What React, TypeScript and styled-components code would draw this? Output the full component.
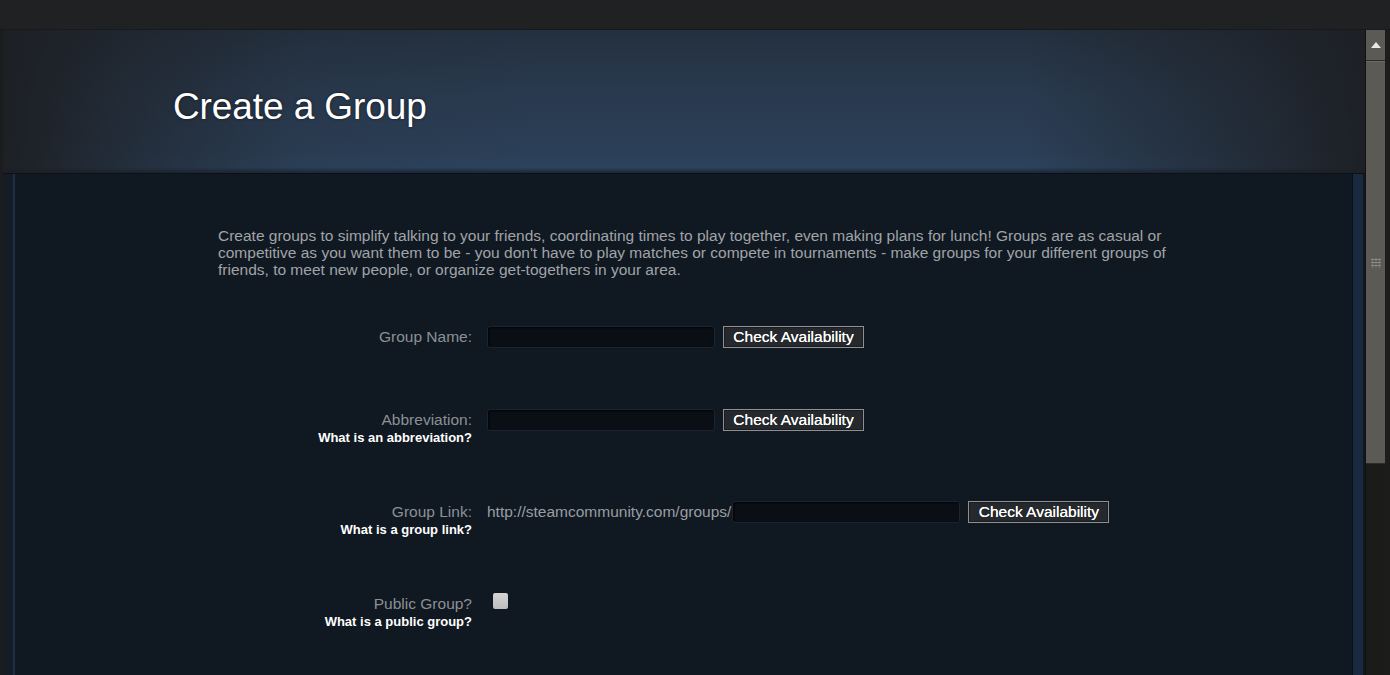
import styled, { createGlobalStyle } from "styled-components";

const GlobalStyle = createGlobalStyle`
  html, body {
    margin: 0;
    padding: 0;
    background: #1f2021;
    overflow: hidden;
  }
  body {
    font-family: "Liberation Sans", Arial, sans-serif;
  }
`;

const Screen = styled.div`
  height: 675px;
  display: flex;
  flex-direction: column;
`;

const TopBar = styled.div`
  height: 30px;
  flex: none;
  background: #202122;
  border-bottom: 1px solid #18191a;
  box-sizing: border-box;
`;

const WindowRow = styled.div`
  flex: 1;
  display: flex;
  padding-left: 3px;
  min-height: 0;
  background: #1b1c1d;
`;

const Main = styled.div`
  flex: 1;
  display: flex;
  flex-direction: column;
  min-width: 0;
`;

const Header = styled.header`
  height: 144px;
  flex: none;
  box-sizing: border-box;
  padding: 56px 0 0 170px;
  border-bottom: 1px solid #0c1118;
  background:
    linear-gradient(to right, rgba(28, 30, 34, 0.95) 0%, rgba(28, 30, 34, 0.55) 9%, rgba(28, 30, 34, 0.1) 22%, transparent 40%, transparent 75%, rgba(28, 30, 34, 0.6) 92%, rgba(28, 30, 34, 0.92) 100%),
    linear-gradient(to bottom, #24303f 0%, #293a4f 45%, #2b3f57 85%, #2c435d 96%, #1b2636 100%);
`;

const Title = styled.h1`
  margin: 0;
  font-size: 37px;
  font-weight: 400;
  color: #ffffff;
  text-shadow: 0 0 3px rgba(0, 0, 0, 0.6);
  letter-spacing: -0.1px;
`;

const Body = styled.div`
  flex: 1;
  display: flex;
  min-height: 0;
`;

const LeftFrame = styled.div`
  width: 10px;
  flex: none;
  background: #151c26;
  border-right: 2px solid #1c2f48;
`;

const RightFrame = styled.div`
  width: 10px;
  flex: none;
  background: #192940;
  border-left: 1px solid #0b0f15;
  border-right: 2px solid #121820;
`;

const Content = styled.main`
  flex: 1;
  background: #101821;
  padding: 53px 0 0 203px;
  box-sizing: border-box;
`;

const Intro = styled.p`
  margin: 0 0 48px;
  width: 975px;
  font-size: 15.5px;
  line-height: 17px;
  color: #a0a4a8;
`;

const Form = styled.div`
  display: flex;
  flex-direction: column;
`;

const Row = styled.div<{ $height: number }>`
  display: grid;
  grid-template-columns: 254px 1fr;
  column-gap: 15px;
  height: ${(p) => p.$height}px;
  align-items: start;
`;

const LabelCell = styled.div`
  text-align: right;
  display: flex;
  flex-direction: column;
  align-items: flex-end;
`;

const Label = styled.label`
  font-size: 15.5px;
  line-height: 22px;
  color: #8c9095;
`;

const SubLabel = styled.a`
  font-size: 13px;
  font-weight: 700;
  line-height: 13px;
  color: #ffffff;
  text-decoration: none;
`;

const Field = styled.div`
  display: flex;
  align-items: center;
  gap: 8px;
`;

const LinkField = styled.div`
  display: flex;
  align-items: center;
`;

const Prefix = styled.span`
  font-size: 15.5px;
  line-height: 22px;
  color: #9a9ea2;
  margin-right: 1px;
`;

const TextInput = styled.input`
  width: 228px;
  height: 22px;
  box-sizing: border-box;
  background: #0a0f16;
  border: 1px solid #1b2430;
  border-radius: 3px;
  box-shadow: inset 1px 1px 2px rgba(0, 0, 0, 0.8);
  outline: none;
  color: #ddd;
  padding: 0 4px;
`;

const CheckButton = styled.button<{ $gap?: number }>`
  height: 22px;
  width: 141px;
  box-sizing: border-box;
  margin-left: ${(p) => p.$gap ?? 0}px;
  padding: 0;
  background: #25282c;
  border: 1px solid #8e9092;
  box-shadow: inset 0 0 0 1px #1a1c1f;
  color: #ffffff;
  font-family: "Liberation Sans", Arial, sans-serif;
  font-size: 15.5px;
  line-height: 20px;
  text-shadow: 0 0 0.6px #ffffff;
  cursor: pointer;
`;

const CheckBox = styled.span`
  display: block;
  width: 15px;
  height: 16px;
  margin: 0 0 0 6px;
  border-radius: 2px;
  background: linear-gradient(to bottom, #d4d4d4, #bdbdbd);
  box-shadow: 0 0 1px rgba(0, 0, 0, 0.8);
`;

const Scrollbar = styled.div`
  width: 20px;
  flex: none;
  display: flex;
  flex-direction: column;
  background: #1b1b19;
  border-left: 1px solid #111;
  box-sizing: border-box;
`;

const ArrowButton = styled.div`
  height: 31px;
  flex: none;
  background: #5b5a55;
  border-bottom: 1px solid #2a2a28;
  display: flex;
  align-items: center;
  justify-content: center;
  box-sizing: border-box;
`;

const Thumb = styled.div`
  height: 401px;
  flex: none;
  background: #5b5a55;
  border-top: 1px solid #6a6964;
  border-bottom: 1px solid #2a2a28;
  display: flex;
  align-items: center;
  justify-content: center;
`;

const EdgeStrip = styled.div`
  width: 5px;
  flex: none;
  background: #1c1c1c;
`;

export default function App() {
  return (
    <Screen>
      <GlobalStyle />
      <TopBar />
      <WindowRow>
        <Main>
          <Header>
            <Title>Create a Group</Title>
          </Header>
          <Body>
            <LeftFrame />
            <Content>
              <Intro>
                Create groups to simplify talking to your friends, coordinating times to play together, even making plans
                for lunch! Groups are as casual or competitive as you want them to be - you don't have to play matches or
                compete in tournaments - make groups for your different groups of friends, to meet new people, or organize
                get-togethers in your area.
              </Intro>
              <Form>
                <Row $height={83}>
                  <LabelCell>
                    <Label>Group Name:</Label>
                  </LabelCell>
                  <Field>
                    <TextInput />
                    <CheckButton>Check Availability</CheckButton>
                  </Field>
                </Row>
                <Row $height={92}>
                  <LabelCell>
                    <Label>Abbreviation:</Label>
                    <SubLabel href="#">What is an abbreviation?</SubLabel>
                  </LabelCell>
                  <Field>
                    <TextInput />
                    <CheckButton>Check Availability</CheckButton>
                  </Field>
                </Row>
                <Row $height={92}>
                  <LabelCell>
                    <Label>Group Link:</Label>
                    <SubLabel href="#">What is a group link?</SubLabel>
                  </LabelCell>
                  <LinkField>
                    <Prefix>http://steamcommunity.com/groups/</Prefix>
                    <TextInput />
                    <CheckButton $gap={8}>Check Availability</CheckButton>
                  </LinkField>
                </Row>
                <Row $height={92}>
                  <LabelCell>
                    <Label>Public Group?</Label>
                    <SubLabel href="#">What is a public group?</SubLabel>
                  </LabelCell>
                  <Field>
                    <CheckBox />
                  </Field>
                </Row>
              </Form>
            </Content>
            <RightFrame />
          </Body>
        </Main>
        <Scrollbar>
          <ArrowButton>
            <svg width="10" height="6" viewBox="0 0 10 6">
              <path d="M0 6 L5 0 L10 6 Z" fill="#e8e8e6" />
            </svg>
          </ArrowButton>
          <Thumb>
            <svg width="10" height="10" viewBox="0 0 10 10">
              <g stroke="#8a8984" strokeWidth="1">
                <path d="M0 1.5 H10 M0 4.5 H10 M0 7.5 H10" />
                <path d="M1.5 0 V10 M5 0 V10 M8.5 0 V10" opacity="0.6" />
              </g>
            </svg>
          </Thumb>
        </Scrollbar>
        <EdgeStrip />
      </WindowRow>
    </Screen>
  );
}
